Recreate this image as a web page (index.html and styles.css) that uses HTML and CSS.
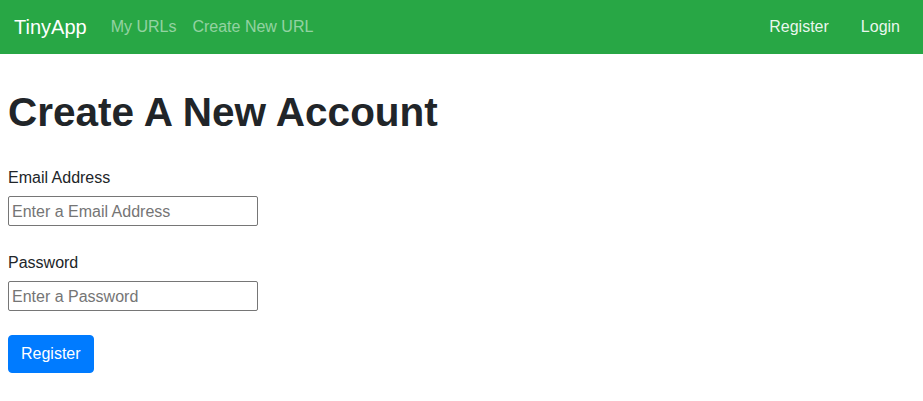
FILE: index.html
```html
<!DOCTYPE html>
<html>
<head>
<meta charset="utf-8">
<link rel="stylesheet" href="styles.css">
</head>
<body>
<nav class="navbar">
  <a class="brand" href="#">TinyApp</a>
  <div class="nav-left">
    <a class="nav-link muted" href="#">My URLs</a>
    <a class="nav-link muted" href="#">Create New URL</a>
  </div>
  <div class="nav-right">
    <a class="nav-link light" href="#">Register</a>
    <a class="nav-link light" href="#">Login</a>
  </div>
</nav>
<main class="content">
  <h1 class="title">Create A New Account</h1>
  <form class="form">
    <div class="group">
      <label class="label" for="email">Email Address</label>
      <input class="field" id="email" type="text" placeholder="Enter a Email Address">
    </div>
    <div class="group">
      <label class="label" for="password">Password</label>
      <input class="field" id="password" type="password" placeholder="Enter a Password">
    </div>
    <button class="btn" type="button">Register</button>
  </form>
</main>
</body>
</html>
```
FILE: styles.css
```css
* { box-sizing: border-box; }
html, body { margin: 0; padding: 0; }
body {
  font-family: "Liberation Sans", Arial, sans-serif;
  font-size: 16px;
  line-height: 1.5;
  color: #212529;
  background: #fff;
}
a { text-decoration: none; }
.navbar {
  display: flex;
  align-items: center;
  height: 54px;
  background: #28a745;
  padding: 0 7px 0 14px;
}
.brand {
  color: #fff;
  font-size: 20px;
  line-height: 30px;
  margin-right: 16px;
}
.nav-left { display: flex; }
.nav-right { display: flex; margin-left: auto; }
.nav-left .nav-link { padding: 0 8px; }
.nav-right .nav-link { padding: 0 16px; }
.nav-link { font-size: 16px; line-height: 24px; }
.muted { color: rgba(255,255,255,0.5); }
.light { color: rgba(255,255,255,0.92); }
.content { padding: 0 8px; }
.title {
  margin: 34px 0 29px;
  font-size: 40.5px;
  line-height: 48px;
  font-weight: 700;
}
.group { display: flex; flex-direction: column; align-items: flex-start; margin-bottom: 24px; }
.label { line-height: 24px; padding-top: 1px; margin-bottom: 6px; }
.field {
  width: 250px;
  height: 30px;
  font-family: inherit;
  font-size: 16px;
  padding: 2px 3px 0;
  border: 1px solid #767676;
  border-radius: 2px;
  color: #212529;
}
.field::placeholder { color: #757575; }
.btn {
  font-family: inherit;
  font-size: 16px;
  line-height: 24px;
  height: 38px;
  padding: 6px 12px;
  color: #fff;
  background: #007bff;
  border: 1px solid #007bff;
  border-radius: 4px;
}
```
